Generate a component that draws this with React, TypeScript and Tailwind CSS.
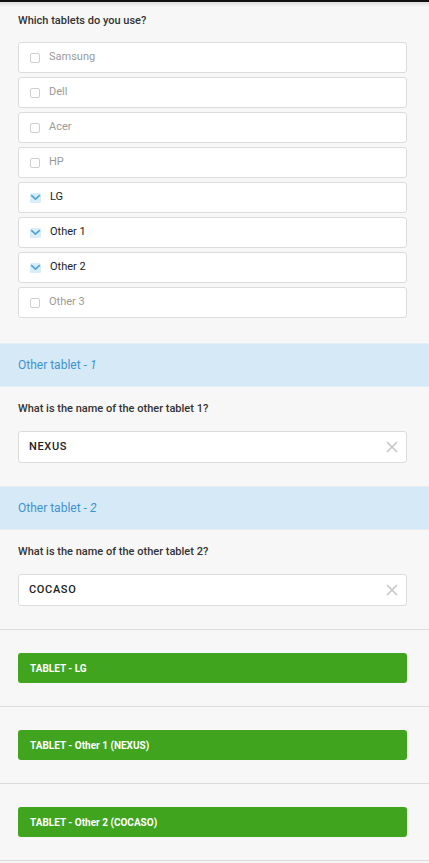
import React from 'react';

const OPTIONS = [
  { name: 'Samsung', checked: false },
  { name: 'Dell', checked: false },
  { name: 'Acer', checked: false },
  { name: 'HP', checked: false },
  { name: 'LG', checked: true },
  { name: 'Other 1', checked: true },
  { name: 'Other 2', checked: true },
  { name: 'Other 3', checked: false },
];

const OTHERS = [
  { n: '1', value: 'NEXUS' },
  { n: '2', value: 'COCASO' },
];

const BUTTONS = ['TABLET - LG', 'TABLET - Other 1 (NEXUS)', 'TABLET - Other 2 (COCASO)'];

function CheckBox({ checked }: { checked: boolean }) {
  if (!checked) {
    return <span className="w-[10px] h-[10px] rounded-[2px] border border-[#cfcfcf] bg-white shrink-0" />;
  }
  return (
    <svg width="11" height="10" viewBox="0 0 11 10" className="shrink-0">
      <rect x="0" y="0" width="11" height="10" rx="1.5" fill="#d9edf9" />
      <path d="M1.2 2.2 L5.5 6.2 L9.8 2.2" fill="none" stroke="#4fa3d6" strokeWidth="1.6" strokeLinejoin="round" />
    </svg>
  );
}

export default function App() {
  return (
    <div className="min-h-[863px] bg-[#f7f7f7] font-['Roboto','Liberation_Sans',sans-serif]">
      {/* top edge */}
      <div className="h-[2px] bg-[#111]" />
      <div className="h-[5px] bg-gradient-to-b from-[#dedede] to-[#f7f7f7]" />

      {/* tablets question */}
      <div className="pl-[18px] pr-[22px] pt-[7px] pb-[25px]">
        <p className="text-[11px] leading-[14px] font-medium text-[#333] mb-[14px]">Which tablets do you use?</p>
        <div className="flex flex-col gap-[4px]">
          {OPTIONS.map((o) => (
            <div
              key={o.name}
              className="h-[31px] flex items-center gap-[9px] pl-[11px] bg-white border border-[#dcdcdc] rounded-[3px]"
            >
              <CheckBox checked={o.checked} />
              <span className={`text-[11px] ${o.checked ? 'text-[#222]' : 'text-[#9a9a9a]'}`}>{o.name}</span>
            </div>
          ))}
        </div>
      </div>

      {OTHERS.map((o) => (
        <div key={o.n}>
          <div className="h-[44px] flex items-center px-[18px] bg-[#d5e9f7] border-y border-[#e4eef5]">
            <span className="text-[12px] text-[#3f93cf]">
              Other tablet - <i>{o.n}</i>
            </span>
          </div>
          <div className="pl-[18px] pr-[22px] pt-[15px] pb-[23px]">
            <p className="text-[11px] leading-[14px] font-medium text-[#333] mb-[15px]">
              What is the name of the other tablet {o.n}?
            </p>
            <div className="h-[32px] flex items-center justify-between pl-[10px] pr-[8px] bg-white border border-[#dcdcdc] rounded-[3px]">
              <span className="text-[11px] font-medium text-[#222] tracking-[0.06em]">{o.value}</span>
              <svg width="12" height="12" viewBox="0 0 12 12">
                <path d="M1 1 L11 11 M11 1 L1 11" stroke="#c4c4c4" strokeWidth="1.5" />
              </svg>
            </div>
          </div>
        </div>
      ))}

      {BUTTONS.map((b) => (
        <div key={b} className="border-t border-[#dcdcdc] pl-[18px] pr-[22px] pt-[23px] pb-[23px]">
          <div className="h-[30px] flex items-center px-[12px] bg-[#40a41e] rounded-[3px]">
            <span className="text-[10px] font-bold text-white">{b}</span>
          </div>
        </div>
      ))}
      <div className="border-t border-[#dcdcdc]" />
    </div>
  );
}
